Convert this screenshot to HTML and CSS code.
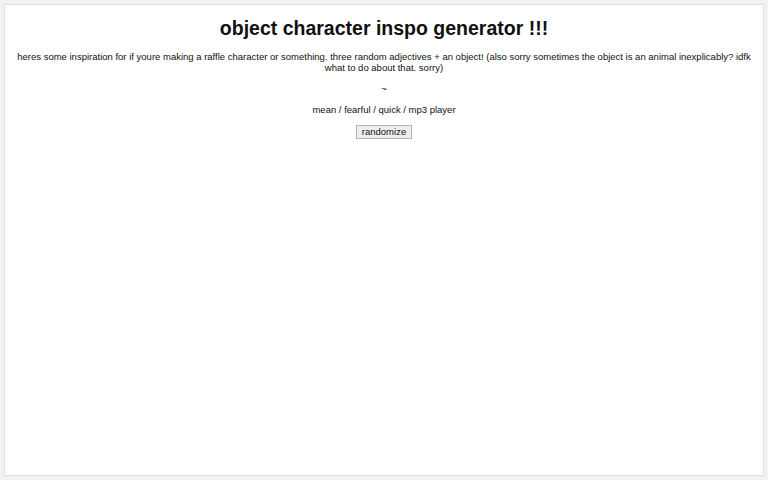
FILE: index.html
```html
<!DOCTYPE html>
<html lang="en">
<head>
    <meta charset="UTF-8">
    <meta name="viewport" content="width=device-width, initial-scale=1.0">
    <title>object character inspo generator</title>
    <link rel="stylesheet" href="styles.css">
</head>
<body>
    <div class="page">
        <h1>object character inspo generator !!!</h1>
        <p>heres some inspiration for if youre making a raffle character or something. three random adjectives + an object! (also sorry sometimes the object is an animal inexplicably? idfk what to do about that. sorry)</p>
        <p>~</p>
        <p id="result">mean / fearful / quick / mp3 player</p>
        <button id="randomizeBtn">randomize</button>
    </div>
</body>
</html>
```

FILE: styles.css
```css
/* plain little generator page */
body { margin: 0; padding: 4px; background: #f2f2f2; font-family: 'Liberation Sans', Arial, sans-serif; color: #111; }
.page { box-sizing: border-box; height: calc(100vh - 8px); padding: 10px 9px; background: #fff; border: 1px solid #dedede; text-align: center; font-size: 9.5px; line-height: 11px; }
h1 { font-size: 19.5px; margin: 2px 0 11px; line-height: 23px; }
p { margin: 10px 0; }
button { display: block; margin: 0 auto; font-family: inherit; font-size: 9.5px; line-height: 10px; padding: 1px 5px; color: #111; background: #efefef; border: 1px solid #b5b5b5; border-radius: 0; cursor: pointer; }
button:hover { background: #e5e5e5; }
```
